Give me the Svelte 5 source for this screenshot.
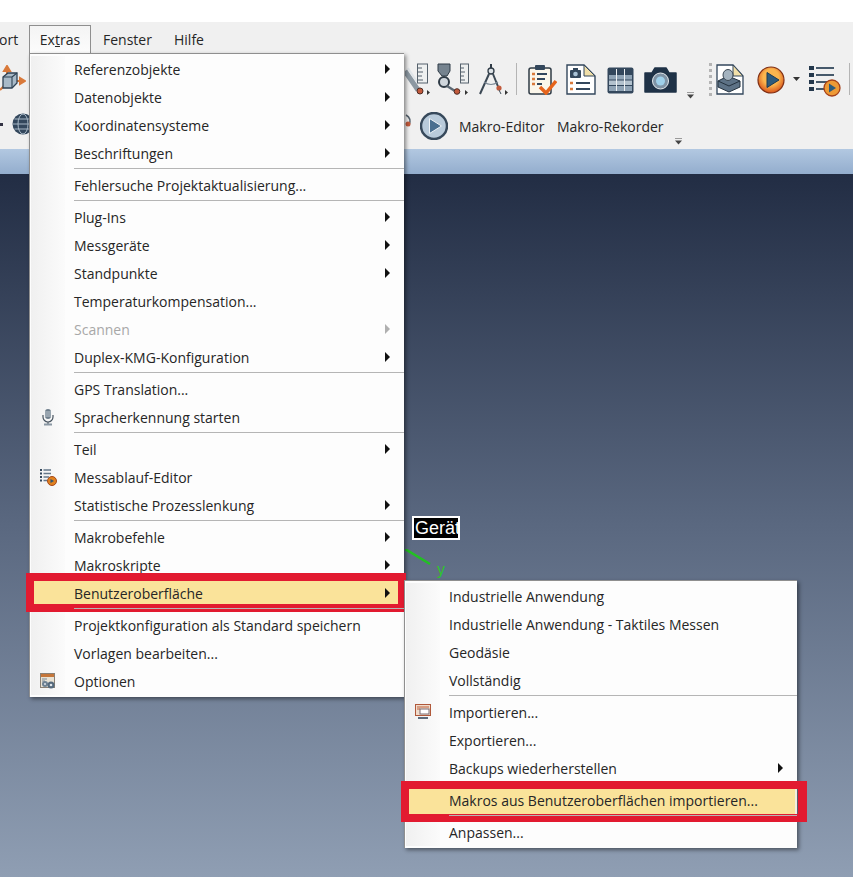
<script>
  const extras = [
    { t: 'Referenzobjekte', sub: true },
    { t: 'Datenobjekte', sub: true },
    { t: 'Koordinatensysteme', sub: true },
    { t: 'Beschriftungen', sub: true },
    { sep: true },
    { t: 'Fehlersuche Projektaktualisierung...' },
    { sep: true },
    { t: 'Plug-Ins', sub: true },
    { t: 'Messgeräte', sub: true },
    { t: 'Standpunkte', sub: true },
    { t: 'Temperaturkompensation...' },
    { t: 'Scannen', sub: true, off: true },
    { t: 'Duplex-KMG-Konfiguration', sub: true },
    { sep: true },
    { t: 'GPS Translation...' },
    { t: 'Spracherkennung starten', icon: 'mic' },
    { sep: true },
    { t: 'Teil', sub: true },
    { t: 'Messablauf-Editor', icon: 'list' },
    { t: 'Statistische Prozesslenkung', sub: true },
    { sep: true },
    { t: 'Makrobefehle', sub: true },
    { t: 'Makroskripte', sub: true },
    { t: 'Benutzeroberfläche', sub: true, mark: true },
    { sep: true },
    { t: 'Projektkonfiguration als Standard speichern' },
    { t: 'Vorlagen bearbeiten...' },
    { t: 'Optionen', icon: 'options' }
  ]

  const oberflaeche = [
    { t: 'Industrielle Anwendung' },
    { t: 'Industrielle Anwendung - Taktiles Messen' },
    { t: 'Geodäsie' },
    { t: 'Vollständig' },
    { sep: true },
    { t: 'Importieren...', icon: 'import' },
    { t: 'Exportieren...' },
    { t: 'Backups wiederherstellen', sub: true },
    { sep: true },
    { t: 'Makros aus Benutzeroberflächen importieren...', mark: true },
    { sep: true },
    { t: 'Anpassen...' }
  ]
</script>

{#snippet menuIcon(name)}
  {#if name === 'mic'}
    <svg width="14" height="18" viewBox="0 0 14 18">
      <rect x="4" y="1" width="6" height="10" rx="3" fill="#6f7f8c" />
      <path d="M4 4h6M4 6h6M4 8h6" stroke="#c3ccd3" />
      <path d="M2 7v2a5 5 0 0 0 10 0V7M7 14v2" fill="none" stroke="#46525e" stroke-width="1.2" />
      <rect x="3" y="15.5" width="8" height="2" fill="#8a97a3" />
    </svg>
  {:else if name === 'list'}
    <svg width="17" height="17" viewBox="0 0 17 17">
      <path d="M0 1h2M0 4.500h2M0 8h2M0 11.500h2" stroke="#33475c" stroke-width="2" />
      <path d="M3.500 1H11M3.500 4.500H11M3.500 8H9M3.500 11.500H7" stroke="#66788a" stroke-width="1.300" />
      <circle cx="12" cy="12" r="4.500" fill="#e0811f" stroke="#a5481a" />
      <path d="M10.500 10v4l3.500-2z" fill="#2d5575" />
    </svg>
  {:else if name === 'options'}
    <svg width="16" height="17" viewBox="0 0 16 17">
      <rect x="0.500" y="0.500" width="14" height="14" fill="#e8e2d4" stroke="#8a8074" />
      <rect x="1" y="1" width="13" height="3" fill="#c5763a" />
      <path d="M2 6h5M2 8h3" stroke="#7a8a99" />
      <circle cx="5" cy="11" r="3" fill="#6d8193" />
      <circle cx="11" cy="12" r="3.500" fill="#55697c" />
      <circle cx="11" cy="12" r="1.300" fill="#dfe5ea" />
      <circle cx="5" cy="11" r="1" fill="#dfe5ea" />
    </svg>
  {:else if name === 'import'}
    <svg width="17" height="16" viewBox="0 0 17 16">
      <rect x="0.500" y="0.500" width="15" height="11" fill="#f0dccc" stroke="#b0583a" />
      <path d="M2 3h12M2 5h3" stroke="#c0603c" stroke-width="1.200" />
      <rect x="5" y="5" width="9" height="5" fill="#fff" stroke="#7a6a70" />
      <path d="M3 13h10v2H3z" fill="#5c6a7a" />
    </svg>
  {/if}
{/snippet}

{#snippet menuRows(items)}
  {#each items as item}
    {#if item.sep}
      <div class="sep"></div>
    {:else}
      <div class="item" class:off={item.off} class:mark={item.mark}>
        <span class="icon">
          {#if item.icon}{@render menuIcon(item.icon)}{/if}
        </span>
        <span class="label">{item.t}</span>
        {#if item.sub}<span class="chev"></span>{/if}
        {#if item.mark}<span class="redbox"></span>{/if}
      </div>
    {/if}
  {/each}
{/snippet}

{#snippet ddArrow()}
  <svg class="dd" width="9" height="7" viewBox="0 0 9 7">
    <path d="M1 0.500h7" stroke="#9a9a9a" />
    <path d="M1 2.500h7L4.500 6.500z" fill="#444" />
  </svg>
{/snippet}

<div class="page">
  <div class="topgap"></div>

  <div class="menubar">
    <span class="mb cut">ort</span>
    <span class="mb extras">Ex<u>t</u>ras</span>
    <span class="mb fenster">Fenster</span>
    <span class="mb hilfe">Hilfe</span>
  </div>

  <div class="toolbar">
    <div class="row one">
      <div class="under">
        <svg width="26" height="28" viewBox="0 0 26 28">
          <path d="M7 14V4M7 1l-3 5h6zM15 16h7M25 16l-5-3v6zM4 21l-4 4" stroke="#d9793a" stroke-width="2" fill="#d9793a" />
          <path d="M3 12l5-4h9v10l-5 5H3z" fill="#a9bac8" stroke="#2f4254" stroke-width="1.300" />
          <path d="M3 12h9v11M12 12l5-4" fill="none" stroke="#2f4254" stroke-width="1.100" />
        </svg>
      </div>

      <svg width="26" height="32" viewBox="0 0 26 32">
        <path d="M0 8l13 19" stroke="#8c98a2" stroke-width="5" />
        <path d="M3 5l9 14" stroke="#dfe4e8" stroke-width="2" />
        <circle cx="15" cy="28" r="3" fill="#c25a3c" stroke="#4c2a22" />
        <rect x="12.500" y="1" width="10" height="19" fill="#eef0f0" stroke="#55616c" />
        <path d="M13 5h4M13 9h5M13 13h4M13 17h5" stroke="#55616c" />
        <path d="M22 27v5l3-2.500z" fill="#333" />
      </svg>
      <svg class="i-probe2" width="33" height="32" viewBox="0 0 33 32">
        <path d="M1 1h12v7l-3 5H5L1 8z" fill="#75838f" stroke="#2f3b46" />
        <circle cx="7" cy="19" r="5" fill="#cfd6dc" stroke="#2f3b46" stroke-width="2" />
        <path d="M10 23l8 5" stroke="#5c6873" stroke-width="2.500" />
        <circle cx="20" cy="28.500" r="2.800" fill="#c25a3c" stroke="#4c2a22" />
        <rect x="23.500" y="1" width="8" height="19" fill="#eef0f0" stroke="#55616c" />
        <path d="M24 5h3M24 9h4M24 13h3M24 17h4" stroke="#55616c" />
        <path d="M28 27v5l3-2.500z" fill="#333" />
      </svg>
      <svg class="i-compass" width="30" height="33" viewBox="0 0 30 33">
        <path d="M13 1v5" stroke="#2f3b46" stroke-width="2" />
        <circle cx="13" cy="8" r="3" fill="#dfe4e8" stroke="#2f3b46" stroke-width="1.300" />
        <path d="M11 11L2 31M15 11l6 15" fill="none" stroke="#3b4854" stroke-width="2" />
        <path d="M6 19q7 5 14 0" fill="none" stroke="#7a8794" stroke-width="1.200" />
        <circle cx="21" cy="25" r="2.600" fill="#c25a3c" />
        <path d="M21 27l2 4" stroke="#3b4854" />
        <path d="M27 27v5l3-2.500z" fill="#333" />
      </svg>
      <span class="vsep"></span>
      <svg class="i-clip" width="29" height="31" viewBox="0 0 29 31">
        <rect x="1" y="4" width="22" height="26" rx="2" fill="#fbf6ea" stroke="#2f3b46" stroke-width="1.500" />
        <rect x="7" y="1" width="10" height="5" rx="1" fill="#33475c" />
        <path d="M4 10h3M4 15h3M4 20h3" stroke="#d9793a" stroke-width="2.500" />
        <path d="M9 10h10M9 15h8M9 20h5" stroke="#33475c" stroke-width="1.800" />
        <path d="M12 23l6 6 10-12" fill="none" stroke="#e5641c" stroke-width="3.500" />
      </svg>
      <svg class="i-doc" width="30" height="31" viewBox="0 0 30 31">
        <path d="M1 1h17l11 11v18H1z" fill="#fff" stroke="#33475c" stroke-width="1.400" />
        <path d="M18 1v11h11z" fill="#f1dfa8" stroke="#33475c" />
        <rect x="4" y="6" width="11" height="8" rx="1" fill="#33475c" />
        <circle cx="9.500" cy="10" r="2.300" fill="#a9c2d6" />
        <rect x="7" y="4" width="5" height="2" fill="#33475c" />
        <path d="M4 19h3M4 25h3" stroke="#d9793a" stroke-width="2.500" />
        <path d="M10 19h14M10 25h14" stroke="#33475c" stroke-width="2" />
      </svg>
      <svg class="i-table" width="27" height="27" viewBox="0 0 27 27">
        <rect x="0.500" y="0.500" width="26" height="26" rx="2" fill="#33475c" />
        <rect x="2" y="8" width="23" height="4.500" fill="#8fa3b5" />
        <rect x="2" y="13.500" width="23" height="4.500" fill="#b3c2ce" />
        <rect x="2" y="19" width="23" height="5" fill="#8fa3b5" />
        <path d="M9.500 2v22M17.500 2v22" stroke="#eef1f3" />
      </svg>
      <svg class="i-camera" width="33" height="27" viewBox="0 0 33 27">
        <path d="M1 7h7l3-5h11l3 5h7v19H1z" fill="#1f3247" stroke="#1f3247" stroke-linejoin="round" stroke-width="1.500" />
        <circle cx="16.500" cy="15" r="8" fill="#7f93a5" stroke="#e5e9ec" stroke-width="1" />
        <circle cx="16.500" cy="15" r="4.500" fill="#9fd0ea" />
      </svg>
      <span class="slot-dd">{@render ddArrow()}</span>
      <span class="dotted"></span>
      <svg class="i-part" width="28" height="31" viewBox="0 0 28 31">
        <path d="M1 1h16l10 11v18H1z" fill="#fff" stroke="#33475c" stroke-width="1.300" />
        <path d="M17 1v11h10z" fill="#f1dfa8" stroke="#33475c" />
        <path d="M2 17l10-5 12 5v6l-11 5-11-5z" fill="#5d7286" stroke="#24323f" />
        <path d="M2 17l11 5 11-5" fill="none" stroke="#24323f" />
        <ellipse cx="12" cy="11" rx="5" ry="5.500" fill="#a4b3bf" stroke="#3b4854" />
      </svg>
      <svg class="i-play" width="28" height="28" viewBox="0 0 28 28">
        <defs>
          <radialGradient id="og" cx="0.500" cy="0.400" r="0.600">
            <stop offset="0.500" stop-color="#fbb64e" />
            <stop offset="1" stop-color="#d8541b" />
          </radialGradient>
        </defs>
        <circle cx="14" cy="14" r="13" fill="url(#og)" stroke="#7f2f14" stroke-width="1.200" />
        <path d="M10 6.500v15L22 14z" fill="#2d5b7d" stroke="#1c3a52" />
      </svg>
      <svg class="i-tiny" width="7" height="4" viewBox="0 0 7 4"><path d="M0 0h7L3.500 4z" fill="#333" /></svg>
      <svg class="i-list" width="33" height="32" viewBox="0 0 33 32">
        <path d="M0 3h5M0 10h5M0 17h5M0 24h5" stroke="#24384c" stroke-width="4" />
        <path d="M7 3h18M7 10h18M7 17h13M7 24h9" stroke="#46596b" stroke-width="2" />
        <circle cx="23" cy="23" r="8" fill="#ee9a35" stroke="#a5401a" stroke-width="1.300" />
        <path d="M20 18.500v9l7-4.500z" fill="#2d5b7d" />
      </svg>
      <span class="vsep last"></span>
    </div>

    <div class="row two">
      <div class="under">
        <span class="tinydot"></span>
        <svg width="22" height="22" viewBox="0 0 22 22">
          <circle cx="11" cy="11" r="10.500" fill="#33475c" />
          <ellipse cx="11" cy="11" rx="5" ry="10" fill="none" stroke="#a8b8c6" />
          <path d="M1 11h20M2.500 6h17M2.500 16h17" stroke="#a8b8c6" />
        </svg>
      </div>
      <svg class="i-redbit" width="8" height="14" viewBox="0 0 8 14">
        <path d="M1 1q6 3 3 11" fill="none" stroke="#55616c" stroke-width="1.500" />
        <circle cx="3" cy="10" r="2.500" fill="#c25a3c" />
      </svg>
      <svg class="i-greyplay" width="28" height="28" viewBox="0 0 28 28">
        <circle cx="14" cy="14" r="13" fill="#b9cbdb" stroke="#37495b" stroke-width="2.500" />
        <path d="M9.500 6.500v15L21.500 14z" fill="#4a6f90" stroke="#eef3f7" />
      </svg>
      <span class="tbtext editor">Makro-Editor</span>
      <span class="tbtext recorder">Makro-Rekorder</span>
      <span class="slot-dd2">{@render ddArrow()}</span>
    </div>
  </div>

  <div class="strip"></div>

  <div class="viewport">
    <span class="device">Gerät</span>
    <svg class="axis" width="30" height="20" viewBox="0 0 30 20">
      <path d="M0 0l25 15" stroke="#22c022" stroke-width="2.500" />
    </svg>
    <span class="axis-y">y</span>
  </div>

  <div class="menu first">
    <div class="gutter"></div>
    {@render menuRows(extras)}
  </div>

  <div class="menu second">
    <div class="gutter"></div>
    {@render menuRows(oberflaeche)}
  </div>
</div>

<style>
  :global(body) {
    margin: 0;
    background: #fff;
  }

  .page {
    position: relative;
    width: 853px;
    height: 877px;
    display: flex;
    flex-direction: column;
    overflow: hidden;
    font-family: "Open Sans", "Noto Sans", sans-serif;
    font-size: 14px;
    color: #262626;
  }

  .topgap {
    height: 22px;
    flex: none;
  }

  .menubar {
    height: 31px;
    flex: none;
    display: flex;
    background: #f0f0f0;
    position: relative;
  }

  .mb {
    line-height: 35px;
  }

  .cut {
    margin-left: -1px;
    width: 30px;
  }

  .extras {
    width: 60px;
    margin-top: 3px;
    line-height: 28px;
    text-align: center;
    border: 1px solid #8f8f8f;
    border-bottom: 0;
    background: linear-gradient(#f4f4f4, #fcfcfc);
  }

  .fenster {
    margin-left: 12px;
    width: 71px;
  }

  .toolbar {
    height: 96px;
    flex: none;
    background: #f0f0f0;
  }

  .row {
    display: flex;
    align-items: center;
  }

  .row.one {
    height: 52px;
    padding-bottom: 2px;
  }

  .row.two {
    height: 42px;
  }

  .row.two .under {
    margin-top: -8px;
  }

  .under {
    width: 405px;
    flex: none;
    display: flex;
    align-items: center;
  }

  .tinydot {
    width: 3px;
    height: 3px;
    background: #334;
    margin-right: 9px;
  }

  .i-probe2 { margin-left: 6px; }
  .i-compass { margin-left: 8px; }

  .vsep {
    width: 1px;
    height: 32px;
    margin-left: 8px;
    background: #b4b4b4;
  }

  .vsep.last {
    margin-left: 7px;
  }

  .i-clip { margin-left: 11px; }
  .i-doc { margin-left: 9px; }
  .i-table { margin-left: 11px; margin-top: 3px; }
  .i-camera { margin-left: 10px; }

  .slot-dd {
    width: 9px;
    margin: 32px 0 0 9px;
  }

  .dd {
    display: block;
  }

  .dotted {
    width: 3px;
    height: 33px;
    margin-left: 14px;
    background: repeating-linear-gradient(#b4b4b4 0 3px, transparent 3px 6px);
  }

  .i-part { margin-left: 4px; }
  .i-play { margin-left: 13px; margin-top: 2px; }
  .i-tiny { margin-left: 8px; }
  .i-list { margin-left: 9px; margin-top: 4px; }

  .i-redbit {
    margin-top: -14px;
  }

  .i-greyplay {
    margin-left: 7px;
    margin-top: -4px;
  }

  .tbtext {
    white-space: nowrap;
    margin-top: -4px;
  }

  .editor {
    margin-left: 11px;
    width: 98px;
  }

  .recorder {
    width: 117px;
  }

  .slot-dd2 {
    margin-top: 27px;
  }

  .strip {
    height: 25px;
    flex: none;
    background: linear-gradient(#b2c8e1, #93adcd);
  }

  .viewport {
    flex: 1;
    position: relative;
    background: linear-gradient(#222d44, #5a6880 50%, #8f9eb3);
  }

  .device {
    position: absolute;
    left: 412px;
    top: 342px;
    width: 43px;
    height: 20px;
    padding-left: 1px;
    overflow: hidden;
    border: 2px solid #fff;
    background: #000;
    color: #fff;
    font-family: "Liberation Sans", sans-serif;
    font-size: 18px;
    line-height: 21px;
  }

  .axis {
    position: absolute;
    left: 405px;
    top: 375px;
  }

  .axis-y {
    position: absolute;
    left: 437px;
    top: 387px;
    color: #2cc52c;
    font-family: "Liberation Sans", sans-serif;
    font-size: 16px;
  }

  .menu {
    position: absolute;
    box-sizing: border-box;
    padding: 1px 0 1px 1px;
    background: #fdfdfd;
    border: 1px solid #8f8f8f;
    border-width: 1px 0 0 1px;
    box-shadow: 2px 2px 4px rgba(0, 0, 0, 0.45);
  }

  .first {
    left: 29px;
    top: 53px;
    width: 375px;
    height: 644px;
  }

  .second {
    left: 404px;
    top: 580px;
    width: 393px;
    height: 268px;
  }

  .gutter {
    position: absolute;
    left: 1px;
    top: 2px;
    bottom: 2px;
    width: 34px;
    background: linear-gradient(90deg, #f0f0f0, #fbfbfb);
  }

  .item {
    position: relative;
    height: 28px;
    display: flex;
    align-items: center;
    white-space: nowrap;
  }

  .icon {
    width: 34px;
    height: 28px;
    margin-right: 9px;
    flex: none;
    display: flex;
    align-items: center;
    justify-content: center;
    position: relative;
  }

  .chev {
    position: absolute;
    right: 14px;
    top: 9px;
    border-left: 5px solid #111;
    border-top: 5px solid transparent;
    border-bottom: 5px solid transparent;
  }

  .off {
    color: #a8a8a8;
  }

  .off .chev {
    border-left-color: #b0b0b0;
  }

  .sep {
    height: 1px;
    margin: 1px 0 2px 43px;
    background: #b5b5b5;
    position: relative;
  }

  .mark {
    background: #fae39a;
  }

  .redbox {
    position: absolute;
    left: -6px;
    right: -2px;
    top: -6px;
    bottom: -5px;
    border: 8px solid #e21a30;
  }

  .second .mark {
    background: linear-gradient(90deg, #fae39a calc(100% - 2px), #f3efe0 0);
  }

  .second .redbox {
    left: -5px;
    right: -10px;
    top: -5px;
    bottom: -8px;
    border-width: 8px 9px 8px 8px;
  }

  .first .mark {
    margin-left: 3px;
  }

  .first .mark .icon {
    width: 31px;
  }

  .first .mark .redbox {
    left: -8px;
  }
</style>
